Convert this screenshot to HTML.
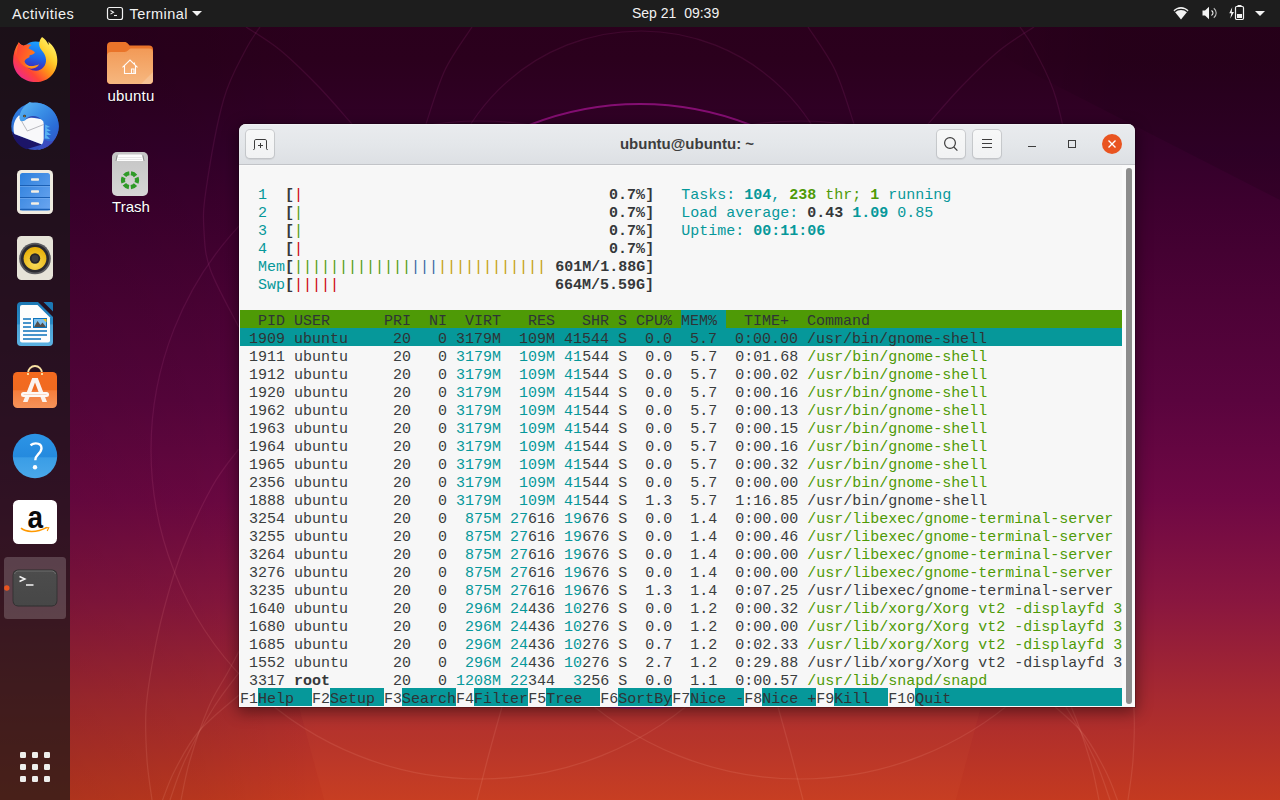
<!DOCTYPE html>
<html lang="en">
<head>
<meta charset="utf-8">
<title>ubuntu@ubuntu: ~</title>
<style>
*{box-sizing:border-box;margin:0;padding:0}
html,body{width:1280px;height:800px;overflow:hidden;background:#2c001e}
body{position:relative;font-family:"Liberation Sans","DejaVu Sans",sans-serif;color:#fff}
#wall{position:absolute;left:0;top:0;width:1280px;height:800px;
 background:linear-gradient(90deg,rgba(0,0,0,.11) 70px,rgba(0,0,0,.07) 200px,rgba(0,0,0,0) 320px),linear-gradient(180deg,#2a001c 0px,#2b001d 60px,#33002a 150px,#3c002e 200px,#4c0236 300px,#5a043e 400px,#6f0844 500px,#89163f 600px,#a82a30 700px,#c43a20 800px)}
#lines{position:absolute;left:0;top:0;width:1280px;height:800px}
#topbar{position:absolute;left:0;top:0;width:1280px;height:27px;background:#1d1d1d;color:#f2f2f2;font-size:14.5px}
#topbar .txt{position:absolute;top:0;height:27px;line-height:27px;white-space:pre}
#dock{position:absolute;left:0;top:27px;width:70px;height:773px;background:rgba(24,24,24,.68)}
.abs{position:absolute}
.dlabel{position:absolute;color:#fff;font-size:15px;text-align:center;white-space:pre;text-shadow:0 1px 1px rgba(0,0,0,.6)}
#win{position:absolute;left:239px;top:124px;width:896px;height:583px;border-radius:7px 7px 0 0;
 background:#fafafa;box-shadow:0 4px 16px 1px rgba(0,0,0,.45),0 0 0 1px rgba(0,0,0,.18)}
#hb{position:absolute;left:0;top:0;width:896px;height:41px;border-radius:7px 7px 0 0;
 background:linear-gradient(180deg,#f4f5f7 0px,#e9ebee 1.5px,#e4e7ea 20px,#dde0e4 40px);border-bottom:1px solid #c2c4c8}
#title{position:absolute;left:0;top:0;width:896px;height:40px;line-height:40px;text-align:center;color:#3d3d3d;font-weight:bold;font-size:15px;white-space:pre}
.btn{position:absolute;top:5px;width:30px;height:30px;border:1px solid rgba(0,0,0,.13);border-radius:5px;
 background:linear-gradient(180deg,#f7f8f8,#f1f2f3);background-clip:padding-box;box-shadow:0 1px 1px rgba(0,0,0,.07)}
.btn svg{position:absolute;left:0;top:0}
#term{position:absolute;left:1px;top:42px;width:882px;height:540px;
 font-family:"Liberation Mono","DejaVu Sans Mono",monospace;font-size:15px;line-height:18px;color:#3a3d3e;background:#f7f7f7}
.row{position:relative;height:18px;width:882px;white-space:pre}
.row i{position:absolute;top:0;height:18px;background:#06989a}
.row .tx{position:absolute;left:0;top:3px;height:18px;line-height:18px;white-space:pre}
.t{color:#06989a}.g{color:#4e9a06}.r{color:#cc0000}.y{color:#c4a000}.bl{color:#3465a4}
.b{font-weight:bold}.kb{font-weight:bold;color:#35383a}
.hdr{background:#4e9a06;color:#2e3436}
.selrow{background:#06989a;color:#2e3436}
.sel{color:#2e3436}
#sb{position:absolute;left:887px;top:44px;width:6px;height:536px;border-radius:3px;background:#8d8d8d}
</style>
</head>
<body>
<div id="wall"></div>
<svg id="lines" viewBox="0 0 1280 800" fill="none">
<defs><clipPath id="nd"><rect x="70" y="27" width="1210" height="773"/></clipPath><linearGradient id="lg" gradientUnits="userSpaceOnUse" x1="0" y1="27" x2="0" y2="800"><stop offset="0" stop-color="#c8389c" stop-opacity=".13"/><stop offset=".5" stop-color="#e060a8" stop-opacity=".12"/><stop offset=".8" stop-color="#ff9c90" stop-opacity=".13"/><stop offset="1" stop-color="#ffb49a" stop-opacity=".14"/></linearGradient></defs>
<g clip-path="url(#nd)">
<linearGradient id="wg" gradientUnits="userSpaceOnUse" x1="990" y1="0" x2="1110" y2="0"><stop offset="0" stop-color="#000" stop-opacity="0"/><stop offset="1" stop-color="#000" stop-opacity=".13"/></linearGradient>
<path d="M960 27H1280V200L1061 88Q1000 58 960 27z" fill="url(#wg)"/>
<path d="M299 707L324 800H956L981 707z" fill="#ff8a4a" fill-opacity=".05"/>
<g stroke="url(#lg)" stroke-width="1.200" fill="none">
<circle cx="641" cy="233" r="202"/>
<circle cx="480" cy="450" r="329"/>
<circle cx="800" cy="450" r="329"/>
<path d="M260.0 27.0C257.6 30.8 251.6 37.8 245.5 50.0C239.4 62.2 230.1 76.7 223.5 100.0C216.9 123.3 209.2 168.2 206.0 190.0C202.8 211.8 203.2 217.7 204.0 231.0C204.8 244.3 204.7 254.0 210.5 270.0C216.3 286.0 234.0 317.5 238.7 327.0"/>
<path d="M1020.0 27.0C1022.4 30.8 1028.4 37.8 1034.5 50.0C1040.6 62.2 1049.9 76.7 1056.5 100.0C1063.1 123.3 1070.8 168.2 1074.0 190.0C1077.2 211.8 1076.8 217.7 1076.0 231.0C1075.2 244.3 1075.3 254.0 1069.5 270.0C1063.7 286.0 1046.0 317.5 1041.3 327.0"/>
<path d="M238.7 449.0C234.3 455.2 221.9 469.2 212.5 486.0C203.1 502.8 190.6 529.3 182.5 550.0C174.4 570.7 168.7 591.3 163.7 610.0C158.7 628.7 155.4 645.3 152.5 662.0C149.6 678.7 146.9 693.7 146.0 710.0C145.1 726.3 146.0 745.0 147.0 760.0C148.0 775.0 151.2 793.3 152.0 800.0"/>
<path d="M1041.3 449.0C1045.7 455.2 1058.1 469.2 1067.5 486.0C1076.9 502.8 1089.4 529.3 1097.5 550.0C1105.6 570.7 1111.3 591.3 1116.3 610.0C1121.3 628.7 1124.5 645.3 1127.5 662.0C1130.5 678.7 1133.1 693.7 1134.0 710.0C1134.9 726.3 1134.0 745.0 1133.0 760.0C1132.0 775.0 1128.8 793.3 1128.0 800.0"/>
<path d="M245.0 640.0C242.2 645.3 234.1 660.8 228.0 672.0C221.9 683.2 215.0 692.3 208.7 707.0C202.4 721.7 194.6 744.5 190.0 760.0C185.4 775.5 182.5 793.3 181.0 800.0"/>
<path d="M1035.0 640.0C1037.8 645.3 1046.0 660.8 1052.0 672.0C1058.0 683.2 1065.0 692.3 1071.3 707.0C1077.6 721.7 1085.4 744.5 1090.0 760.0C1094.6 775.5 1097.5 793.3 1099.0 800.0"/>
<path d="M245.0 665.0C239.8 672.0 224.0 691.2 214.0 707.0C204.0 722.8 192.3 744.5 185.0 760.0C177.7 775.5 172.5 793.3 170.0 800.0"/>
<path d="M1035.0 665.0C1040.2 672.0 1056.0 691.2 1066.0 707.0C1076.0 722.8 1087.7 744.5 1095.0 760.0C1102.3 775.5 1107.5 793.3 1110.0 800.0"/>
<path d="M245.0 690.0C237.5 696.7 211.7 716.7 200.0 730.0C188.3 743.3 181.2 758.3 175.0 770.0C168.8 781.7 164.6 795.0 162.5 800.0"/>
<path d="M1035.0 690.0C1042.5 696.7 1068.3 716.7 1080.0 730.0C1091.7 743.3 1098.8 758.3 1105.0 770.0C1111.2 781.7 1115.4 795.0 1117.5 800.0"/>
<path d="M502.0 707.0C500.0 714.2 494.2 734.5 490.0 750.0C485.8 765.5 479.2 791.7 477.0 800.0"/>
<path d="M778.0 707.0C780.0 714.2 785.8 734.5 790.0 750.0C794.2 765.5 800.8 791.7 803.0 800.0"/>
<path d="M472.0 27.0C467.5 34.2 452.7 53.8 445.0 70.0C437.3 86.2 429.2 115.0 426.0 124.0"/>
<path d="M808.0 27.0C812.5 34.2 827.3 53.8 835.0 70.0C842.7 86.2 850.8 115.0 854.0 124.0"/>
<path d="M246.0 27.0C251.7 30.8 268.0 40.2 280.0 50.0C292.0 59.8 306.0 73.7 318.0 86.0C330.0 98.3 346.3 117.7 352.0 124.0"/>
<path d="M1034.0 27.0C1028.3 30.8 1012.0 40.2 1000.0 50.0C988.0 59.8 974.0 73.7 962.0 86.0C950.0 98.3 933.7 117.7 928.0 124.0"/>
</g>
<circle cx="640" cy="406" r="302" stroke="#9a1286" stroke-opacity=".8" stroke-width="2" fill="none"/>
</g>

</svg>

<!-- desktop icons -->
<svg class="abs" style="left:107px;top:42px" width="46" height="42" viewBox="0 0 46 42">
 <defs>
  <linearGradient id="fo1" x1="0" y1="0" x2="0" y2="1"><stop offset="0" stop-color="#f29a57"/><stop offset="1" stop-color="#f6b77f"/></linearGradient>
 </defs>
 <path d="M4 0h13.5c1.6 0 2.4.6 3.3 1.6L22.6 3.4H42a4 4 0 0 1 4 4V38a4 4 0 0 1-4 4H4a4 4 0 0 1-4-4V4a4 4 0 0 1 4-4z" fill="#e9742a"/>
 <path d="M0 14a4 4 0 0 1 4-4h13.6c1.6 0 2.5-.5 3.4-1.4l.8-.8c.8-.8 1.600-1.200 2.800-1.200H42a4 4 0 0 1 4 4V38a4 4 0 0 1-4 4H4a4 4 0 0 1-4-4z" fill="url(#fo1)"/>
 <path d="M15.500 25.300L23 18l7.500 7.300M17.500 23.800v7.700h11v-7.700M24.500 31.500v-4.500h2.500v4.500M27.500 20.500v2" stroke="#fff" stroke-width="1.100" fill="none" stroke-opacity=".95"/>
 <path d="M46 30v8a4 4 0 0 1-4 4h-8z" fill="#fff" fill-opacity=".18"/>
</svg>
<div class="dlabel" style="left:91px;top:86px;width:80px;height:20px;line-height:20px;letter-spacing:.2px">ubuntu</div>

<svg class="abs" style="left:112px;top:152px" width="36" height="44" viewBox="0 0 36 44">
 <defs><linearGradient id="tr1" x1="0" y1="0" x2="0" y2="1"><stop offset="0" stop-color="#c4c4c4"/><stop offset="1" stop-color="#d6d6d6"/></linearGradient></defs>
 <rect x="0" y="0" width="36" height="44" rx="5" fill="url(#tr1)"/>
 <path d="M4.500 3.500h27l1 5.500h-29z" fill="#8e8e8e"/>
 <path d="M7.500 2.500h21c1 0 1.600.5 1.800 1.500l1.200 5h-27l1.200-5c.2-1 .8-1.500 1.800-1.500z" fill="#fdfdfd"/>
 <path d="M6.500 5.500h23M6 7.500h24" stroke="#d8d8d8" stroke-width=".6"/>
 <circle cx="18" cy="28.200" r="7" fill="none" stroke="#2f9a28" stroke-width="4.200" stroke-dasharray="5.400 1.930" stroke-dashoffset="-.96" transform="rotate(-90 18 28.200)"/>
</svg>
<div class="dlabel" style="left:91px;top:197px;width:80px;height:20px;line-height:20px">Trash</div>

<div id="topbar">
 <div class="txt" style="left:12px;letter-spacing:.5px;top:.5px">Activities</div>
 <svg class="abs" style="left:106px;top:6px" width="18" height="15" viewBox="0 0 18 15">
  <rect x="1.500" y="1.500" width="15" height="12" rx="2" fill="none" stroke="#f2f2f2" stroke-width="1.200"/>
  <path d="M4.500 4.500l3 1.800-3 1.800" stroke="#f2f2f2" stroke-width="1.100" fill="none"/>
  <path d="M8 9.500h3" stroke="#f2f2f2" stroke-width="1.100"/>
 </svg>
 <div class="txt" style="left:129.500px;letter-spacing:.45px;top:.5px">Terminal</div>
 <svg class="abs" style="left:192px;top:11px" width="10" height="5" viewBox="0 0 10 5"><path d="M0 0h10L5 5z" fill="#f2f2f2"/></svg>
 <div class="txt" style="left:632px;font-size:14px">Sep 21  09:39</div>
 <!-- wifi -->
 <svg class="abs" style="left:1173px;top:6px" width="16" height="14" viewBox="0 0 16 14">
  <path d="M8 13.500L.5 4.200C2.500 2.300 5.100 1 8 1s5.500 1.300 7.500 3.200z" fill="#f2f2f2"/>
  <path d="M1.600 5.700C3.400 4.200 5.500 3.400 8 3.400s4.600.8 6.400 2.300" stroke="#1d1d1d" stroke-width="1.400" fill="none"/>
 </svg>
 <!-- speaker -->
 <svg class="abs" style="left:1201.500px;top:6px" width="16" height="14" viewBox="0 0 16 14">
  <path d="M.5 4.500h2.500L7 .8v12.400L3 9.500H.5z" fill="#f2f2f2"/>
  <path d="M9.500 4.500c1 .7 1.500 1.500 1.500 2.500s-.5 1.800-1.500 2.500" stroke="#f2f2f2" stroke-width="1.100" fill="none"/>
  <path d="M11.800 2.200c1.600 1.300 2.400 2.900 2.400 4.800s-.8 3.500-2.400 4.800" stroke="#bdbdbd" stroke-width="1.100" fill="none"/>
 </svg>
 <!-- battery -->
 <svg class="abs" style="left:1229px;top:4px" width="16" height="17" viewBox="0 0 16 17">
  <path d="M3.200 3.200L.3 9.200h2L1.300 14.500 5 8h-2.200z" fill="#f2f2f2"/>
  <rect x="6.500" y="2.500" width="8" height="13" rx="1.200" fill="none" stroke="#f2f2f2" stroke-width="1.200"/>
  <rect x="8.500" y="1" width="4" height="1.500" fill="#f2f2f2"/>
  <rect x="8" y="10" width="5" height="4" fill="#f2f2f2"/>
 </svg>
 <svg class="abs" style="left:1255px;top:11px" width="10" height="5" viewBox="0 0 10 5"><path d="M0 0h10L5 5z" fill="#f2f2f2"/></svg>
</div>

<div id="dock">
<svg class="abs" style="left:0;top:0" width="70" height="773" viewBox="0 27 70 773">
 <defs>
  <linearGradient id="ffA" x1="0.85" y1="0.05" x2="0.1" y2="0.8">
   <stop offset="0" stop-color="#fff36b"/><stop offset="0.28" stop-color="#ffd12e"/><stop offset="0.52" stop-color="#ff9318"/><stop offset="0.78" stop-color="#ff4535"/><stop offset="1" stop-color="#f02c80"/>
  </linearGradient>
  <linearGradient id="ffB" x1="0.6" y1="0" x2="0.4" y2="1">
   <stop offset="0" stop-color="#1aa3ff"/><stop offset="0.55" stop-color="#1e63e8"/><stop offset="1" stop-color="#4a1aa8"/>
  </linearGradient>
  <linearGradient id="ffC" x1="0.3" y1="0" x2="0.6" y2="1">
   <stop offset="0" stop-color="#fff36b"/><stop offset="0.5" stop-color="#ffd42e"/><stop offset="1" stop-color="#ff9a1c"/>
  </linearGradient>
  <linearGradient id="ffD" x1="0" y1="0.2" x2="1" y2="0.6">
   <stop offset="0" stop-color="#ff4335"/><stop offset="1" stop-color="#ff8a12"/>
  </linearGradient>
  <linearGradient id="tbA" x1="0.2" y1="0" x2="0.8" y2="1">
   <stop offset="0" stop-color="#2f7fe0"/><stop offset="0.5" stop-color="#2a66d0"/><stop offset="1" stop-color="#3a45b8"/>
  </linearGradient>
  <linearGradient id="tbB" x1="0.1" y1="0" x2="0.9" y2="1">
   <stop offset="0" stop-color="#5ab4f2"/><stop offset="0.35" stop-color="#3a8fe6"/><stop offset="0.7" stop-color="#2a6cd6"/><stop offset="1" stop-color="#3552c4"/>
  </linearGradient>
  <linearGradient id="flA" x1="0" y1="0" x2="1" y2="1">
   <stop offset="0" stop-color="#2c7fdc"/><stop offset="1" stop-color="#6ba6f0"/>
  </linearGradient>
  <radialGradient id="rbY" cx="0.5" cy="0.75" r="0.7">
   <stop offset="0" stop-color="#f8dc5a"/><stop offset="1" stop-color="#e8b008"/>
  </radialGradient>
  <linearGradient id="loA" x1="0" y1="0" x2="0" y2="1">
   <stop offset="0" stop-color="#1c78b4"/><stop offset="0.5" stop-color="#2a8ac6"/><stop offset="0.52" stop-color="#4aa0d4"/><stop offset="1" stop-color="#5bb2e2"/>
  </linearGradient>
  <linearGradient id="usA" x1="0" y1="0" x2="0" y2="1">
   <stop offset="0" stop-color="#f46a1f"/><stop offset="0.5" stop-color="#f06a20"/><stop offset="0.52" stop-color="#f37d3c"/><stop offset="1" stop-color="#f6935a"/>
  </linearGradient>
  <linearGradient id="hpA" x1="0" y1="0" x2="0" y2="1">
   <stop offset="0" stop-color="#2c94e6"/><stop offset="0.52" stop-color="#258ade"/><stop offset="0.54" stop-color="#3a9de6"/><stop offset="1" stop-color="#4aa8ea"/>
  </linearGradient>
  <linearGradient id="tmA" x1="0" y1="0" x2="0" y2="1">
   <stop offset="0" stop-color="#4c4c4c"/><stop offset="1" stop-color="#474747"/>
  </linearGradient>
 </defs>

 <!-- Firefox -->
 <g>
  <circle cx="35.500" cy="56.500" r="15" fill="url(#ffB)"/>
  <path d="M18.800 42.300C15 48 13 54 13.100 61c.2 12 9.900 21.100 22.900 21.100s21.500-10.100 21.300-22.100c-.1-8-3.800-14.500-9.200-18.600.5 1.400.7 2.400.5 3.600-1.600-3.500-3.800-6.200-6.600-8-2.500 3-3.500 6.500-2.500 9.500 1.300 4 6 6.500 6.500 13 .4 6-4 11.200-10 11.200-5 0-9.500-2.700-11.500-7.200-2-4.500-1.500-10.500.5-15.500l-2.500-2.500c-1.500-.5-2.700-1.500-3.700-3.200z" fill="url(#ffA)"/>
  <path d="M18.800 42.300c1.200 1.900 2.700 2.900 4.700 3.100 2.500-1.100 5-1.200 8-.5-1.700.9-2.700 2.100-2.900 3.700 1.900.9 4.400 1.900 6.400 3.800-1.500 1.800-3.500 2.600-5.500 2.800.3 1-.0 1.800-.6 2.400-1.900.9-3.900 1.900-4.400 3.900 1 4.500 6.500 6.500 14.400 3.100-1.900 3.900-6.900 4.900-10.900 3.400-6-2-10.500-8-11-14-.2-4 .5-8 1.800-11.700z" fill="url(#ffD)"/>
  <path d="M24.500 61.500c1 4.500 6.500 6.500 14.400 3.100-1.500 2.200-4.200 3.200-7 3.200-3.600 0-6.600-2.400-7.400-6.300z" fill="#ff9a1c"/>
 </g>

 <!-- Thunderbird -->
 <g>
  <circle cx="35" cy="126.300" r="23.700" fill="url(#tbA)"/>
  <path d="M11.800 131c1.200 8.500 6.800 15.500 14.700 18.200L42 144.500 14.400 134z" fill="#1c1568"/>
  <path d="M18.800 115.600l24.900 4v24l-1.700.9-27.600-10.500c-.9-2.600-1.100-5.400-.7-8.400.4-3.500 2-7 5.100-10z" fill="#f8f8fa"/>
  <path d="M19.500 117.500l7.800 13.500 16.400-6.500" fill="none" stroke="#9c9ca4" stroke-width=".7"/>
  <path d="M20.600 121c-1.300-2-1.300-4.500-.6-7 1.200-4.500 4.500-9 9.700-12 1.300.6 2.800.8 4.300.7 13.500-.5 24.800 9.800 24.800 23.600 0 11.200-8.300 21.200-20.800 23.700 3.500-3.500 5.800-8 6.300-13 .5-5.500.5-11-.8-15.500-2.500-3.300-6.500-4.900-10.500-4.800-3.500.1-6 1.300-8 3.800-1.500.7-3 .8-4.400.5z" fill="url(#tbB)"/>
  <path d="M25.500 119.500c3.500-4.800 12-5.300 18 2-1.200-1.500-2.800-2.600-4.800-3.300-4.500-1.200-9.500-.7-13.200 1.300z" fill="#2c3aa8" opacity=".85"/>
  <path d="M45.200 124.500l4.800 2.500-4 .8 5 3.200-4.500.3 4.700 3.700-5 0 3.800 4-5.300-.5c.4-4.700.6-9.300.5-14z" fill="#58b2f2"/>
  <path d="M44.300 139c2.500 2.500 6 3 9.500 1.500-2.500 4.500-7.500 8-15.800 9.500 3.500-3 5.500-6.500 6.300-11z" fill="#3f47bd" opacity=".8"/>
  <circle cx="24.500" cy="116" r="1.300" fill="#3a2814"/>
  <circle cx="24.500" cy="116" r=".55" fill="#e8a838"/>
 </g>

 <!-- Files -->
 <g>
  <rect x="17" y="170" width="36" height="44" rx="4.500" fill="#efebe1"/>
  <rect x="20" y="173" width="30" height="37.500" rx="2.500" fill="url(#flA)"/>
  <path d="M20 185.500h30M20 197.500h30" stroke="#1a5fb4" stroke-width="1"/>
  <path d="M20 186.500h30M20 198.500h30" stroke="#8ab8f2" stroke-width=".6" opacity=".7"/>
  <path d="M20 209.500h30" stroke="#1a5fb4" stroke-width="1.500"/>
  <rect x="31" y="178.200" width="8" height="2.600" rx=".8" fill="#f4efe4"/>
  <rect x="31" y="190.200" width="8" height="2.600" rx=".8" fill="#f4efe4"/>
  <rect x="31" y="202.200" width="8" height="2.600" rx=".8" fill="#f4efe4"/>
 </g>

 <!-- Rhythmbox -->
 <g>
  <rect x="17" y="236" width="36" height="44" rx="4.500" fill="#e6e3d8"/>
  <circle cx="35" cy="258.500" r="15.800" fill="#5a5a5e"/>
  <circle cx="35" cy="258.500" r="14" fill="#2a2a30"/>
  <circle cx="35" cy="258.500" r="11.400" fill="url(#rbY)"/>
  <circle cx="35" cy="258.500" r="5.200" fill="#26262a"/>
  <circle cx="35" cy="258.500" r="3.400" fill="#3c3c3e"/>
 </g>

 <!-- LibreOffice Writer -->
 <g>
  <path d="M21 302h17l15 15v25a4 4 0 0 1-4 4H21a4 4 0 0 1-4-4v-36a4 4 0 0 1 4-4z" fill="url(#loA)"/>
  <path d="M22 305h15.500l12.500 12.500v23a2 2 0 0 1-2 2H22a2 2 0 0 1-2-2v-33.500a2 2 0 0 1 2-2z" fill="#fdfdfd"/>
  <path d="M43.500 302h8a1.500 1.500 0 0 1 1.500 1.500v8z" fill="#1c78b4"/>
  <path d="M23 319h8M23 323h8M23 327h8M23 331h24M23 335h24M23 339h18" stroke="#0c72ba" stroke-width="1.600"/>
  <rect x="33.500" y="318.500" width="13" height="9" fill="#7ec0ee" stroke="#0c72ba" stroke-width="1"/>
  <path d="M34 327l3.500-6 3 4 2-2.500 3.500 4.500z" fill="#55504c"/>
  <path d="M43 319h3.500v3.500z" fill="#ffc20e"/>
 </g>

 <!-- Ubuntu Software -->
 <g>
  <path d="M28 374.500v-1.500a7 7 0 0 1 14 0v1.500" fill="none" stroke="#f8e0a2" stroke-width="1.900"/>
  <rect x="13" y="372" width="44" height="36" rx="4.500" fill="url(#usA)"/>
  <path d="M28 375v-2M42 375v-2" stroke="#f8e0a2" stroke-width="1.900"/>
  <path d="M23 402l9.200-24h5.600l9.200 24h-4.600l-7.400-19.500-7.400 19.500z" fill="#fbf3ee"/>
  <rect x="21" y="392" width="28" height="5" rx="2.500" fill="#fdf9f6"/>
  <path d="M23.500 394.500h23" stroke="#f8cdb6" stroke-width=".8"/>
 </g>

 <!-- Help -->
 <g>
  <circle cx="35" cy="456" r="22.200" fill="url(#hpA)"/>
  <path d="M30.500 445.200c1.600-1.200 3.400-1.800 5.200-1.800 3.600 0 5.800 2 5.800 4.900 0 2.400-1.400 4-3.200 5.800-1.900 1.900-3 3.400-3 6.100" fill="none" stroke="#fff" stroke-width="2.400"/>
  <circle cx="35" cy="467.300" r="2.200" fill="#fff"/>
 </g>

 <!-- Amazon -->
 <g>
  <rect x="13" y="500" width="44" height="44" rx="5.500" fill="#fff"/>
  <text x="39.300" y="527.800" text-anchor="middle" transform="scale(.9 1)" font-family="'Liberation Sans','DejaVu Sans',sans-serif" font-weight="bold" font-size="31" fill="#0a0a0a">a</text>
  <path d="M21 528.200c4.500 3.800 14.500 5.200 26-.8" fill="none" stroke="#ff9900" stroke-width="1.600"/>
  <path d="M45.500 527.500l3.200.2-1.500 3.300" fill="none" stroke="#ff9900" stroke-width="1.100"/>
 </g>

 <!-- Terminal (running, focused) -->
 <g>
  <rect x="4" y="557" width="62" height="62" rx="3.500" fill="#fff" fill-opacity=".19"/>
  <circle cx="6.800" cy="588" r="2.700" fill="#e95420"/>
  <rect x="12.600" y="569.600" width="44.800" height="36.800" rx="5.500" fill="#2e2e2e"/>
  <rect x="13.400" y="570.400" width="43.200" height="35.200" rx="4.800" fill="url(#tmA)"/>
  <path d="M14.500 574c.8-2 2-3 4-3h33c2 0 3.200 1 4 3" fill="none" stroke="#777" stroke-width=".8"/>
  <path d="M19.500 576.500l5.500 2.500-5.500 2.500" fill="none" stroke="#f4f4f4" stroke-width="1.400"/>
  <path d="M26 585h7.500" stroke="#f4f4f4" stroke-width="1.500"/>
 </g>

 <!-- Show applications -->
 <g fill="#eeeeec">
  <rect x="20" y="752" width="6" height="6" rx="1.300"/><rect x="32" y="752" width="6" height="6" rx="1.300"/><rect x="44" y="752" width="6" height="6" rx="1.300"/>
  <rect x="20" y="764" width="6" height="6" rx="1.300"/><rect x="32" y="764" width="6" height="6" rx="1.300"/><rect x="44" y="764" width="6" height="6" rx="1.300"/>
  <rect x="20" y="776" width="6" height="6" rx="1.300"/><rect x="32" y="776" width="6" height="6" rx="1.300"/><rect x="44" y="776" width="6" height="6" rx="1.300"/>
 </g>
</svg>

</div>

<div id="win">
 <div id="hb">
  <div id="title">ubuntu@ubuntu: ~</div>
  <div class="btn" style="left:6px"><svg width="28" height="28" viewBox="0 0 28 28" fill="none" stroke="#3d3d3d" stroke-width="1">
   <path d="M7.200 19.500h.6c.4 0 .7-.3.7-.7v-8c0-.7.600-1.300 1.300-1.300h9.400c.7 0 1.300.6 1.300 1.300v8c0 .4.300.7.700.7h.6"/>
   <path d="M12 15.500h5M14.500 13v5"/></svg></div>
  <div class="btn" style="left:697px"><svg width="28" height="28" viewBox="0 0 28 28" fill="none" stroke="#3d3d3d" stroke-width="1.200">
   <circle cx="13" cy="13" r="5.400"/><path d="M16.800 17l3.600 3.600"/></svg></div>
  <div class="btn" style="left:733px"><svg width="28" height="28" viewBox="0 0 28 28" fill="none" stroke="#3d3d3d" stroke-width="1">
   <path d="M9 9.500h10M9 13.500h10M9 17.500h10"/></svg></div>
  <svg class="abs" style="left:783px;top:10px" width="20" height="20" viewBox="0 0 20 20"><path d="M6 12.500h8" stroke="#3d3d3d" stroke-width="1"/></svg>
  <svg class="abs" style="left:823px;top:10px" width="20" height="20" viewBox="0 0 20 20"><rect x="6.500" y="6.500" width="7" height="7" fill="none" stroke="#3d3d3d" stroke-width="1"/></svg>
  <svg class="abs" style="left:863px;top:10px" width="20" height="20" viewBox="0 0 20 20"><circle cx="10" cy="10" r="10" fill="#e95420"/><path d="M6.500 6.500l7 7M13.500 6.500l-7 7" stroke="#fff" stroke-width="1.400"/></svg>
 </div>
 <div id="term">
<div class="row"></div>
<div class="row"><span class="tx"><span class="t">  1  </span><span class="kb">[</span><span class="r">|</span>                                  <span class="kb">0.7%</span><span class="kb">]</span>   <span class="t">Tasks: </span><span class="t b">104</span><span class="t">, </span><span class="g b">238</span><span class="g"> thr; </span><span class="g b">1</span><span class="t"> running</span></span></div>
<div class="row"><span class="tx"><span class="t">  2  </span><span class="kb">[</span><span class="g">|</span>                                  <span class="kb">0.7%</span><span class="kb">]</span>   <span class="t">Load average: </span><span class="kb">0.43 </span><span class="t b">1.09 </span><span class="t">0.85</span></span></div>
<div class="row"><span class="tx"><span class="t">  3  </span><span class="kb">[</span><span class="g">|</span>                                  <span class="kb">0.7%</span><span class="kb">]</span>   <span class="t">Uptime: </span><span class="t b">00:11:06</span></span></div>
<div class="row"><span class="tx"><span class="t">  4  </span><span class="kb">[</span><span class="r">|</span>                                  <span class="kb">0.7%</span><span class="kb">]</span></span></div>
<div class="row"><span class="tx"><span class="t">  Mem</span><span class="kb">[</span><span class="g">|||||||||||||</span><span class="bl">|||</span><span class="y">||||||||||||</span> <span class="kb">601M/1.88G</span><span class="kb">]</span></span></div>
<div class="row"><span class="tx"><span class="t">  Swp</span><span class="kb">[</span><span class="r">|||||</span>                        <span class="kb">664M/5.59G</span><span class="kb">]</span></span></div>
<div class="row"></div>
<div class="row hdr"><i style="left:441px;width:45px"></i><span class="tx">  PID USER      PRI  NI  VIRT   RES   SHR S CPU% <span class="sel">MEM% </span>  TIME+  Command                            </span></div>
<div class="row selrow"><span class="tx"> 1909 ubuntu     20   0 3179M  109M 41544 S  0.0  5.7  0:00.00 /usr/bin/gnome-shell</span></div>
<div class="row"><span class="tx"> 1911 ubuntu     20   0 <span class="t">3179M</span>  <span class="t">109M</span> <span class="t">41</span>544 S  0.0  5.7  0:01.68 <span class="g">/usr/bin/gnome-shell</span></span></div>
<div class="row"><span class="tx"> 1912 ubuntu     20   0 <span class="t">3179M</span>  <span class="t">109M</span> <span class="t">41</span>544 S  0.0  5.7  0:00.02 <span class="g">/usr/bin/gnome-shell</span></span></div>
<div class="row"><span class="tx"> 1920 ubuntu     20   0 <span class="t">3179M</span>  <span class="t">109M</span> <span class="t">41</span>544 S  0.0  5.7  0:00.16 <span class="g">/usr/bin/gnome-shell</span></span></div>
<div class="row"><span class="tx"> 1962 ubuntu     20   0 <span class="t">3179M</span>  <span class="t">109M</span> <span class="t">41</span>544 S  0.0  5.7  0:00.13 <span class="g">/usr/bin/gnome-shell</span></span></div>
<div class="row"><span class="tx"> 1963 ubuntu     20   0 <span class="t">3179M</span>  <span class="t">109M</span> <span class="t">41</span>544 S  0.0  5.7  0:00.15 <span class="g">/usr/bin/gnome-shell</span></span></div>
<div class="row"><span class="tx"> 1964 ubuntu     20   0 <span class="t">3179M</span>  <span class="t">109M</span> <span class="t">41</span>544 S  0.0  5.7  0:00.16 <span class="g">/usr/bin/gnome-shell</span></span></div>
<div class="row"><span class="tx"> 1965 ubuntu     20   0 <span class="t">3179M</span>  <span class="t">109M</span> <span class="t">41</span>544 S  0.0  5.7  0:00.32 <span class="g">/usr/bin/gnome-shell</span></span></div>
<div class="row"><span class="tx"> 2356 ubuntu     20   0 <span class="t">3179M</span>  <span class="t">109M</span> <span class="t">41</span>544 S  0.0  5.7  0:00.00 <span class="g">/usr/bin/gnome-shell</span></span></div>
<div class="row"><span class="tx"> 1888 ubuntu     20   0 <span class="t">3179M</span>  <span class="t">109M</span> <span class="t">41</span>544 S  1.3  5.7  1:16.85 /usr/bin/gnome-shell</span></div>
<div class="row"><span class="tx"> 3254 ubuntu     20   0  <span class="t">875M</span> <span class="t">27</span>616 <span class="t">19</span>676 S  0.0  1.4  0:00.00 <span class="g">/usr/libexec/gnome-terminal-server</span></span></div>
<div class="row"><span class="tx"> 3255 ubuntu     20   0  <span class="t">875M</span> <span class="t">27</span>616 <span class="t">19</span>676 S  0.0  1.4  0:00.46 <span class="g">/usr/libexec/gnome-terminal-server</span></span></div>
<div class="row"><span class="tx"> 3264 ubuntu     20   0  <span class="t">875M</span> <span class="t">27</span>616 <span class="t">19</span>676 S  0.0  1.4  0:00.00 <span class="g">/usr/libexec/gnome-terminal-server</span></span></div>
<div class="row"><span class="tx"> 3276 ubuntu     20   0  <span class="t">875M</span> <span class="t">27</span>616 <span class="t">19</span>676 S  0.0  1.4  0:00.00 <span class="g">/usr/libexec/gnome-terminal-server</span></span></div>
<div class="row"><span class="tx"> 3235 ubuntu     20   0  <span class="t">875M</span> <span class="t">27</span>616 <span class="t">19</span>676 S  1.3  1.4  0:07.25 /usr/libexec/gnome-terminal-server</span></div>
<div class="row"><span class="tx"> 1640 ubuntu     20   0  <span class="t">296M</span> <span class="t">24</span>436 <span class="t">10</span>276 S  0.0  1.2  0:00.32 <span class="g">/usr/lib/xorg/Xorg vt2 -displayfd 3</span></span></div>
<div class="row"><span class="tx"> 1680 ubuntu     20   0  <span class="t">296M</span> <span class="t">24</span>436 <span class="t">10</span>276 S  0.0  1.2  0:00.00 <span class="g">/usr/lib/xorg/Xorg vt2 -displayfd 3</span></span></div>
<div class="row"><span class="tx"> 1685 ubuntu     20   0  <span class="t">296M</span> <span class="t">24</span>436 <span class="t">10</span>276 S  0.7  1.2  0:02.33 <span class="g">/usr/lib/xorg/Xorg vt2 -displayfd 3</span></span></div>
<div class="row"><span class="tx"> 1552 ubuntu     20   0  <span class="t">296M</span> <span class="t">24</span>436 <span class="t">10</span>276 S  2.7  1.2  0:29.88 /usr/lib/xorg/Xorg vt2 -displayfd 3</span></div>
<div class="row"><span class="tx"> 3317 <span class="kb">root      </span> 20   0 <span class="t">1208M</span> <span class="t">22</span>344  <span class="t">3</span>256 S  0.0  1.1  0:00.57 <span class="g">/usr/lib/snapd/snapd</span></span></div>
<div class="row"><i style="left:18px;width:54px"></i><i style="left:90px;width:54px"></i><i style="left:162px;width:54px"></i><i style="left:234px;width:54px"></i><i style="left:306px;width:54px"></i><i style="left:378px;width:54px"></i><i style="left:450px;width:54px"></i><i style="left:522px;width:54px"></i><i style="left:594px;width:54px"></i><i style="left:675px;width:207px"></i><span class="tx">F1<span class="sel">Help  </span>F2<span class="sel">Setup </span>F3<span class="sel">Search</span>F4<span class="sel">Filter</span>F5<span class="sel">Tree  </span>F6<span class="sel">SortBy</span>F7<span class="sel">Nice -</span>F8<span class="sel">Nice +</span>F9<span class="sel">Kill  </span>F10<span class="sel">Quit                   </span></span></div>
 </div>
 <div id="sb"></div>
</div>
</body>
</html>
